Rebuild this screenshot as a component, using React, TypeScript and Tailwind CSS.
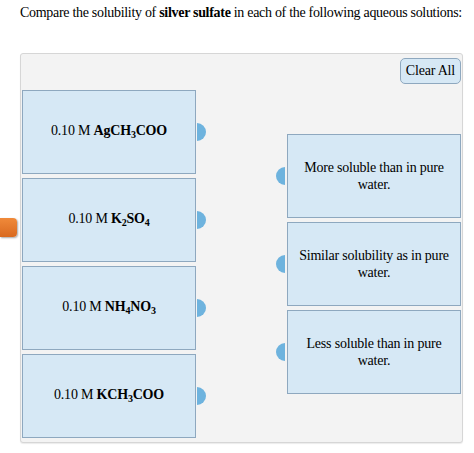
import React from "react";

const serif = { fontFamily: '"Liberation Serif", "Times New Roman", serif' };

function LeftBox({ children }: { children: React.ReactNode }) {
  return (
    <div className="relative">
      <div className="w-[174px] h-[84px] bg-[#d6e8f5] border border-[#8ea8bf] flex items-center justify-center text-[14px] tracking-[-0.2px] text-black pb-[3px]">
        <span>{children}</span>
      </div>
      <div className="absolute left-[175px] top-[33px] w-[9px] h-[18px] rounded-r-full bg-[#6eb3de]" />
    </div>
  );
}

function RightBox({ children }: { children: React.ReactNode }) {
  return (
    <div className="relative">
      <div className="absolute left-[-11px] top-[33px] w-[9px] h-[18px] rounded-l-full bg-[#6eb3de]" />
      <div className="w-[174px] h-[84px] bg-[#d6e8f5] border border-[#8ea8bf] flex items-center justify-center text-center text-[14px] tracking-[-0.2px] leading-[17px] text-black px-[8px]">
        <span>{children}</span>
      </div>
    </div>
  );
}

export default function App() {
  return (
    <div className="relative w-[474px] h-[453px] bg-white overflow-hidden" style={serif}>
      <div className="pl-[20px] pt-[4px] text-[14px] tracking-[-0.3px] leading-[18px] text-black whitespace-nowrap">
        Compare the solubility of <b>silver sulfate</b> in each of the following aqueous solutions:
      </div>
      <div className="absolute left-0 top-[218px] w-[17px] h-[19px] rounded-r-[4px] bg-gradient-to-b from-[#f08a3a] to-[#d9691e] shadow-[1px_1px_2px_rgba(0,0,0,0.35)]" />
      <div className="ml-[20px] mt-[31px] w-[443px] h-[390px] bg-[#f3f3f3] border border-[#d6d6d6] rounded-[3px] shadow-[0_1px_1px_rgba(0,0,0,0.08)] flex flex-col">
        <div className="flex justify-end pt-[4px] pr-[1px]">
          <button className="h-[26px] px-[5px] bg-[#d6e8f5] border border-[#8ea8bf] rounded-[5px] text-[14px] tracking-[-0.2px] text-black leading-none" style={serif}>
            Clear All
          </button>
        </div>
        <div className="flex justify-between pl-[1px] pr-[1px]">
          <div className="flex flex-col gap-[4px] pt-[6px]">
            <LeftBox>
              0.10 M <b>AgCH<sub className="text-[10px]">3</sub>COO</b>
            </LeftBox>
            <LeftBox>
              0.10 M <b>K<sub className="text-[10px]">2</sub>SO<sub className="text-[10px]">4</sub></b>
            </LeftBox>
            <LeftBox>
              0.10 M <b>NH<sub className="text-[10px]">4</sub>NO<sub className="text-[10px]">3</sub></b>
            </LeftBox>
            <LeftBox>
              0.10 M <b>KCH<sub className="text-[10px]">3</sub>COO</b>
            </LeftBox>
          </div>
          <div className="flex flex-col gap-[4px] pt-[50px]">
            <RightBox>More soluble than in pure water.</RightBox>
            <RightBox>Similar solubility as in pure water.</RightBox>
            <RightBox>Less soluble than in pure water.</RightBox>
          </div>
        </div>
      </div>
    </div>
  );
}
